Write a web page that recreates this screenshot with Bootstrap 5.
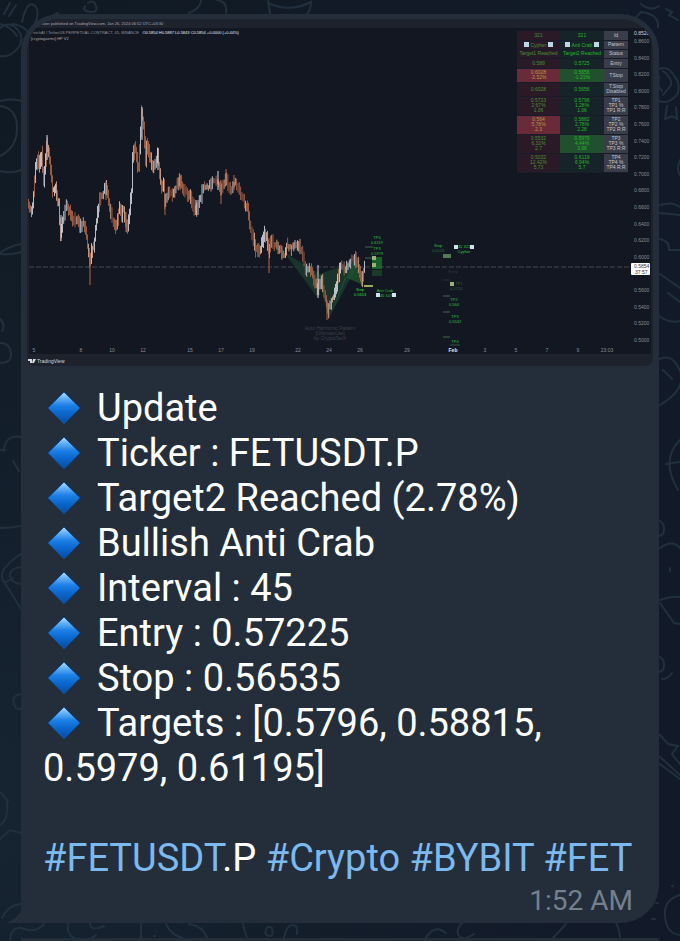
<!DOCTYPE html>
<html lang="en">
<head>
<meta charset="utf-8">
<meta name="viewport" content="width=device-width, initial-scale=1">
<title>FETUSDT.P update</title>
<link href="https://cdn.jsdelivr.net/npm/bootstrap@5.3.0/dist/css/bootstrap.min.css" rel="stylesheet">
<style>
  body { background: radial-gradient(ellipse at 0% 85%, #162331 0%, transparent 60%), linear-gradient(100deg, #101a24 0%, #111a26 50%, #121a2a 100%); color: #fff; font-family: Roboto, "Noto Sans", sans-serif; }
  .chat { padding: 14px 21px 0; }
  .doodles { z-index: 0; }
  .bubble { background: #232e3a; border-radius: 38px 38px 38px 0; padding: 5px 6px 2px; z-index: 1; }
  .tail { left: -13px; bottom: 0; width: 14px; height: 16px; fill: #232e3a; }
  .chart { border-radius: 32px 32px 8px 8px; }
  .chart text { font-family: "Liberation Sans", Arial, sans-serif; font-size: 5px; }
  .chart .tiny text { font-size: 4px; }
  .message { font-size: 38px; line-height: 45px; padding: 20px 16px 0; }
  .message a { color: #7cb9ee; }
  .gem { width: 36px; height: 36px; margin: -3px 15px 3px 3px; }
  .stamp { font-size: 28px; line-height: 40px; color: #74808c; padding-right: 20px; }
  .next-bubble { background: #232e3a; height: 3px; margin-top: 15px; }
  .targets { width: 111px; border-collapse: collapse; font: 5px/5px "Liberation Sans", Arial, sans-serif; color: #25b825; text-align: center; table-layout: fixed; }
  .targets td, .targets th { padding: 0; font-weight: 400; white-space: nowrap; border-bottom: 1px solid #171c28; }
  .targets td:nth-child(1) { background: #2a1a27; width: 43px; color: #459130; }
  .targets td:nth-child(2) { background: #16242a; width: 44px; }
  .targets th { background: #393c49; color: #c3c5cc; width: 24px; }
  .targets td.stopped:nth-child(n) { background: #6a2a38; color: #b29a45; }
  .targets td.hit:nth-child(n) { background: #21502f; }
  .h9 { height: 9px; } .h10 { height: 10px; } .h14 { height: 14px; } .h19 { height: 19px; }
  .flag { display: inline-block; width: 5px; height: 5px; background: #bcd6e5; }
</style>
</head>
<body>
<svg width="0" height="0" class="position-absolute" aria-hidden="true">
  <defs>
    <linearGradient id="gemFill" x1="0" y1="0" x2="0" y2="1">
      <stop offset="0" stop-color="#b4dcfb"/><stop offset=".2" stop-color="#62aff5"/><stop offset=".42" stop-color="#1c80e6"/><stop offset=".65" stop-color="#0b68cf"/><stop offset="1" stop-color="#084b9f"/>
    </linearGradient>
    <symbol id="gem" viewBox="0 0 36 36">
      <path d="M18 2 34 18 18 34 2 18Z" fill="url(#gemFill)" stroke="#0b4f9c" stroke-width="1" stroke-linejoin="round"/>
    </symbol>
  </defs>
</svg>

<main class="chat position-relative">
  <svg class="doodles position-absolute top-0 start-0 w-100 h-100" viewBox="0 0 680 941" preserveAspectRatio="none" fill="none" stroke="#22303d" stroke-width="2" stroke-linecap="round" aria-hidden="true">
    <path d="M4 14 10 3M9 16 16 5M0 24q10 2 17 12M22 22C25 8 29 2 34 5s5 15-2 22M0 28q9-8 18 2q7 9 0 18q-8 10-18 8M13 24q12 2 16 10M88 3q6-4 8 3t-6 6t-5-6M54 15l4-2M201 0q0 8-12 13M217 0q11 2 9 13M268 0l2 14M268 3q22 10 43-1q0 8-4 12M0 106q17 2 17 22t-17 28M0 101q12-3 21 0M0 171q12 3 21-1M0 253q9-7 21-9M0 254q12 1 21-2M0 319q6 6 2 12M0 343q10 0 11 10t-11 10"/>
    <path d="M4 451Q5 434 21 437M0 450h5M13 461l6 10M0 528q11 0 21-2M21 554Q-3 570 3 580L21 609M21 567q-12 2-11 9t11 8M6 582l7-4M21 694q-10 2-7 10t7 4M0 792l8 9M7 800q2 20-7 25M0 839l10-9 11 3M2 918q6-13 19-14M10 939q2-14 14-10t20-5M68 924q-2 13 10 15t18-4M90 924q1 8 14 2M141 924v15M154 936h1M166 924q5 12 20 15M189 924q14 2 18 14M243 924l4 15M266 930q1-5 6-2q2 9-3 8t-3-6M284 938q2-12 8-13t5 9M425 939q10-16 21-6M462 923q-7 8-3 13t15-2M552 939l14-15M616 923q3 4 4 14"/>
    <path d="M633 20l8-8q18 2 17 15M641 4q10 8 18 2M666 9l6 3-3 3 9 5M660 69q8-4 15 8q5 6 3 16q-8 12-19 8M663 71q9 6 8 14l-8 10M659 77q-2 10 3 14M667 106l-2 13 7-3 5 3-1-12M680 160q-4 10 0 15M660 205q12-4 20 2M660 213l20 2M660 239q10 2 9 11l11 0M660 274l20 14M668 293l12 9M659 316q11 8 21 5M660 359q13-6 20 12t-20 34M663 370l9 9M680 440q-20 20-2 50M666 464l14-2M660 521q6 4 3 13l-4 2M660 548q12-9 20 0M660 600q12-4 20-3M670 568v3M660 603l14 20 6 1M660 657q6 4 3 13l-4 2M662 679q6 0 10-6M660 735l8 9 10 2-6 8 8 10M660 757l20 18M660 764l20 15M680 895q-17 5-15 22t15 18M672 886h1M656 903h2M652 919h3"/>
  </svg>

  <article class="bubble position-relative">
    <svg class="tail position-absolute" viewBox="0 0 14 16" aria-hidden="true"><path d="M14 0Q12 10 0 15V16H14Z"/></svg>

    <svg id="chart" class="chart d-block w-100" viewBox="27 19 626 347" role="img" aria-label="FETUSDT.P price chart">
      <rect x="27" y="19" width="626" height="347" fill="#1e222d"/>
      <path d="M29 28H651V354H29Z" fill="#131722"/>
      <g class="tiny" fill="#a6a9b2">
        <text x="42" y="25">user published on TradingView.com, Jan 26, 2024 06:52 UTC+03:30</text>
        <text x="31" y="34" fill="#8e929c">FetchAI / TetherUS PERPETUAL CONTRACT, 45, BINANCE &#160; <tspan fill="#eceef2">O0.5854 H0.5887 L0.5843 C0.5854 +0.0000 (+0.44%)</tspan></text>
        <text x="31" y="40">[cryptogaems] HP V2</text>
      </g>
      <path d="M29 267H632" stroke="#444853" stroke-width="1" stroke-dasharray="5 2"/>
      <path d="M279 245 317 297 319 273 290 256Z M317 275 361 259 329 318Z" fill="#1b3c30" opacity=".8"/>
      <path d="M329 318 354 260 363 285 345 277Z" fill="#1c5530" opacity=".8"/>
      <g id="candles" stroke-width="1"></g>

      <g fill="#3b404b" text-anchor="middle">
        <text x="330" y="330">Auto Harmonic Pattern</text><text x="330" y="335">[UltimateLite]</text><text x="330" y="340">by CryptoTech</text>
      </g>
      <g stroke="#3f6a46"><path d="M365 247h8M365 258h7M443 296h7M443 312h7M443 337h7"/><path d="M364 286h9" stroke="#98ae58" stroke-width="2"/><path d="M443 256h8" stroke="#557a4c" stroke-width="4"/><path d="M443 280h7" stroke="#283038"/></g>
      <path d="M372 257h10v12h-10Z" fill="#1c7a2b" opacity=".75"/><path d="M372 270h10v6h-10Z" fill="#193c29"/>
      <g class="tiny" fill="#2cc234" text-anchor="middle">
        <text x="377" y="239">TP4</text><text x="377" y="244">0.6119</text>
        <text x="377" y="250">TP3</text><text x="377" y="255">0.5979</text>
        <text x="360" y="291" fill="#2edc38">Stop</text><text x="360" y="296" fill="#2edc38">0.5653</text>
        <text x="385" y="292">Anti Crab</text><text x="386" y="297">45 107</text>
        <text x="438" y="247">Stop</text><text x="438" y="252" fill="#2c6638">0.6028</text>
        <text x="464" y="248">45 321</text><text x="464" y="253">Cypher</text>
        <text x="453" y="273" fill="#303943">Entry</text>
        <text x="459" y="285" fill="#33603b">TP1</text><text x="456" y="290" fill="#33603b">0.5723</text>
        <text x="454" y="301">TP2</text><text x="454" y="306">0.564</text>
        <text x="455" y="318">TP3</text><text x="455" y="323">0.5532</text>
        <text x="455" y="343">TP4</text>
      </g>
      <path d="M450 345h10" stroke="#2a5c35"/>
      <path d="M372 256h4v4h-4ZM372 263h4v4h-4ZM450 282h4v4h-4Z" fill="#9cb178"/>
      <path d="M376 293h4v4h-4ZM392 293h4v4h-4ZM454 245h4v4h-4ZM470 245h4v4h-4Z" fill="#cfe2ee"/>

      <g id="priceAxis" fill="#898d98"><text x="634" y="35" fill="#d3d5da">0.8520</text></g>
      <rect x="631" y="263" width="19" height="12" rx="1" fill="#fff"/>
      <g fill="#30333d"><text x="634" y="268">0.5854</text><text x="635" y="274">37:57</text></g>
      <g id="dateAxis" fill="#898d98" text-anchor="middle"></g>
      <g fill="#d7d9df"><path d="M28 359h4v4h-2v-2h-2ZM33 359h3l-2 4h-2Z"/><text x="37" y="363">TradingView</text></g>

      <foreignObject x="517" y="31" width="112" height="150">
        <table class="targets">
          <tr class="h9"><td>321</td><td>321</td><th scope="row">Id</th></tr>
          <tr class="h9"><td><span class="flag"></span> Cypher <span class="flag"></span></td><td><span class="flag"></span> Anti Crab <span class="flag"></span></td><th scope="row">Pattern</th></tr>
          <tr class="h9"><td>Target1 Reached</td><td>Target2 Reached</td><th scope="row">Status</th></tr>
          <tr class="h10"><td>0.589</td><td>0.5725</td><th scope="row">Entry</th></tr>
          <tr class="h14"><td class="stopped">0.6028<br>-2.52%</td><td class="hit">0.5656<br>-1.21%</td><th scope="row">TStop</th></tr>
          <tr class="h14"><td>0.6028</td><td>0.5656</td><th scope="row">T.Stop<br>Disabled</th></tr>
          <tr class="h19"><td>0.5723<br>2.67%<br>1.06</td><td>0.5796<br>1.28%<br>1.06</td><th scope="row">TP1<br>TP1 %<br>TP1 R:R</th></tr>
          <tr class="h19"><td class="stopped">0.564<br>5.78%<br>2.3</td><td>0.5882<br>2.78%<br>2.28</td><th scope="row">TP2<br>TP2 %<br>TP2 R:R</th></tr>
          <tr class="h19"><td>0.5532<br>6.32%<br>2.7</td><td class="hit">0.5979<br>4.44%<br>3.68</td><th scope="row">TP3<br>TP3 %<br>TP3 R:R</th></tr>
          <tr class="h19"><td>0.5032<br>12.42%<br>5.73</td><td>0.6119<br>6.94%<br>5.7</td><th scope="row">TP4<br>TP4 %<br>TP4 R:R</th></tr>
        </table>
      </foreignObject>
    </svg>

    <div class="message">
      <div><svg class="gem" role="img" aria-label="blue diamond"><use href="#gem"/></svg>Update</div>
      <div><svg class="gem" role="img" aria-label="blue diamond"><use href="#gem"/></svg>Ticker : FETUSDT.P</div>
      <div><svg class="gem" role="img" aria-label="blue diamond"><use href="#gem"/></svg>Target2 Reached (2.78%)</div>
      <div><svg class="gem" role="img" aria-label="blue diamond"><use href="#gem"/></svg>Bullish Anti Crab</div>
      <div><svg class="gem" role="img" aria-label="blue diamond"><use href="#gem"/></svg>Interval : 45</div>
      <div><svg class="gem" role="img" aria-label="blue diamond"><use href="#gem"/></svg>Entry : 0.57225</div>
      <div><svg class="gem" role="img" aria-label="blue diamond"><use href="#gem"/></svg>Stop : 0.56535</div>
      <div><svg class="gem" role="img" aria-label="blue diamond"><use href="#gem"/></svg>Targets : [0.5796, 0.58815, 0.5979, 0.61195]</div>
      <br>
      <div><a class="text-decoration-none" href="#FETUSDT">#FETUSDT</a>.P <a class="text-decoration-none" href="#Crypto">#Crypto</a> <a class="text-decoration-none" href="#BYBIT">#BYBIT</a> <a class="text-decoration-none" href="#FET">#FET</a></div>
    </div>
    <div class="d-flex justify-content-end"><time class="stamp" datetime="01:52">1:52 AM</time></div>
  </article>
  <div class="next-bubble"></div>
</main>

<script src="https://cdn.jsdelivr.net/npm/bootstrap@5.3.0/dist/js/bootstrap.bundle.min.js"></script>
<script>
  const NS = 'http://www.w3.org/2000/svg';
  const add = (parent, tag, attrs, text) => {
    const el = document.createElementNS(NS, tag);
    for (const k in attrs) el.setAttribute(k, attrs[k]);
    if (text) el.textContent = text;
    parent.appendChild(el);
  };

  // Price track as x,y pairs; candles are drawn between neighbouring points.
  const track = [28,203,30,208,32,212,34,196,36,168,38,158,40,165,42,153,43,172,44,180,46,160,47,142,49,155,52,178,53,190,56,188,59,205,60,222,61,235,63,222,67,203,70,212,73,220,77,220,80,226,84,222,87,238,90,260,91,262,92,250,94,248,97,220,100,200,104,192,107,188,110,208,114,225,117,228,120,205,122,215,124,208,126,222,128,230,130,210,132,190,133,160,135,145,138,165,139,170,141,130,142,112,144,125,146,160,147,145,150,155,153,170,157,160,158,152,160,175,162,190,164,185,165,205,169,190,173,195,180,178,183,188,188,195,191,198,196,212,200,200,204,188,209,187,213,180,218,183,221,190,226,178,231,190,236,182,240,192,245,203,248,210,250,225,254,240,256,250,260,252,263,240,265,232,267,238,269,252,271,240,275,245,280,250,285,256,287,245,292,248,298,243,302,253,306,270,310,268,313,275,318,288,322,282,326,300,328,312,332,300,335,295,338,280,341,265,346,270,350,262,355,258,359,266,362,280,365,266];
  const wicks = [47,135,160,0,90,255,285,1,142,107,140,0,269,238,273,1,61,215,241,0,165,195,215,1,180,174,190,1,218,171,190,0,221,180,204,1,226,169,185,1,234,175,190,1,196,200,215,0,106,181,200,1,126,212,232,1,158,148,170,0,318,265,298,0,327,300,320,1,356,252,268,1];
  const colors = ['#d6d9e1', '#b26648', '#e5ad8c'];
  const g = document.getElementById('candles');
  let seed = 11;
  const rnd = () => (seed = (seed * 16807) % 2147483647) / 2147483647;
  for (let i = 0; i + 3 < track.length; i += 2) {
    const [x0, y0, x1, y1] = track.slice(i, i + 4);
    const steps = Math.max(1, Math.round((x1 - x0) / 1.2));
    for (let s = 0; s < steps; s++) {
      const a = y0 + (y1 - y0) * s / steps, b = y0 + (y1 - y0) * (s + 1) / steps;
      const x = x0 + (x1 - x0) * (s + .5) / steps;
      const tone = rnd() < .3 ? 2 : (b < a ? 0 : 1);
      add(g, 'path', { d: `M${x} ${Math.min(a, b) - 1 - rnd() * 7}V${Math.max(a, b) + 1 + rnd() * 7}`, stroke: rnd() < .2 ? colors[1] : colors[tone], opacity: .85 });
    }
  }
  for (let i = 0; i < wicks.length; i += 4)
    add(g, 'path', { d: `M${wicks[i]} ${wicks[i + 1]}V${wicks[i + 2]}`, stroke: colors[wicks[i + 3]] });

  const prices = ['0.8600','0.8400','0.8200','0.8000','0.7800','0.7600','0.7400','0.7200','0.7000','0.6800','0.6600','0.6400','0.6200','0.6000','','0.5600','0.5400','0.5200','0.5000'];
  prices.forEach((p, i) => p && add(document.getElementById('priceAxis'), 'text', { x: 634, y: Math.round(43 + i * 16.6) }, p));
  [[34,'5'],[81,'8'],[112,'10'],[143,'12'],[190,'15'],[221,'17'],[252,'19'],[298,'22'],[329,'24'],[360,'26'],[407,'29'],[453,'Feb'],[485,'3'],[516,'5'],[547,'7'],[578,'9'],[607,'23:03']]
    .forEach(([x, t]) => add(document.getElementById('dateAxis'), 'text', t === 'Feb' ? { x, y: 352, fill: '#e0e2e8', 'font-weight': 700 } : { x, y: 352 }, t));
</script>
</body>
</html>
